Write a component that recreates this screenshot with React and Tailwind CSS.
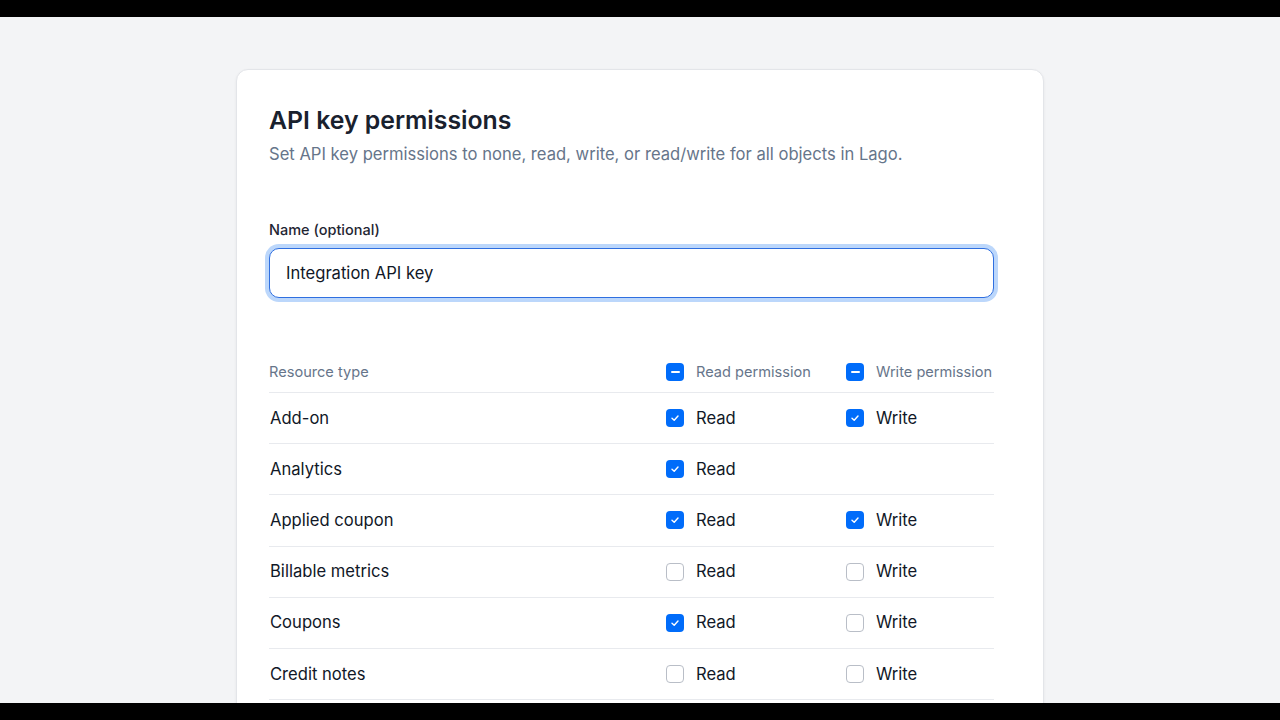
import React from "react";

const rows = [
  { name: "Add-on", read: true, write: true },
  { name: "Analytics", read: true, write: null },
  { name: "Applied coupon", read: true, write: true },
  { name: "Billable metrics", read: false, write: false },
  { name: "Coupons", read: true, write: false },
  { name: "Credit notes", read: false, write: false },
];

function Box({ state }) {
  if (state === "indeterminate") {
    return (
      <span className="flex h-[18px] w-[18px] shrink-0 items-center justify-center rounded-[4px] bg-[#006cfa]">
        <span className="h-[2px] w-[9px] rounded-full bg-white" />
      </span>
    );
  }
  if (state) {
    return (
      <span className="flex h-[18px] w-[18px] shrink-0 items-center justify-center rounded-[4px] bg-[#006cfa]">
        <svg width="10" height="10" viewBox="0 0 10 10" fill="none">
          <polyline points="2,5.2 4.2,7.2 8,3" stroke="white" strokeWidth="1.4" strokeLinecap="round" strokeLinejoin="round" />
        </svg>
      </span>
    );
  }
  return <span className="block h-[18px] w-[18px] shrink-0 rounded-[4px] border border-[#b9bec7] bg-white" />;
}

export default function App() {
  return (
    <div className="flex h-[720px] w-full flex-col overflow-hidden bg-black" style={{ fontFamily: "Inter, 'Noto Sans', sans-serif" }}>
      <div className="h-[17px] shrink-0 bg-black" />
      <div className="flex-1 overflow-hidden bg-[#f3f4f6]">
        <div className="mx-auto mt-[52px] w-[808px] rounded-[12px] border border-[#e3e5e9] bg-white pb-10 pl-8 pr-[49px] pt-[34px] shadow-[0_1px_3px_rgba(0,0,0,0.06)]">
          <h1 className="text-[24.8px] font-semibold leading-[32px] text-[#19212e]">API key permissions</h1>
          <p className="mt-[6px] text-[16.6px] leading-[24px] text-[#66758a]">
            Set API key permissions to none, read, write, or read/write for all objects in Lago.
          </p>

          <label className="mt-[54px] block text-[14.5px] font-medium leading-[20px] text-[#1f2633]">Name (optional)</label>
          <div className="mt-2 flex h-[50px] items-center rounded-[10px] border border-[#2f6fe0] bg-white px-4 ring-4 ring-[#bcd7fb]">
            <span className="text-[16.6px] text-[#111827]">Integration API key</span>
          </div>

          <div className="mt-[51px]">
            <div className="grid h-[44px] grid-cols-[397px_180px_148px] items-center border-b border-[#e8eaee] pt-[4px] text-[14.6px] text-[#66758a]">
              <span>Resource type</span>
              <span className="flex items-center gap-3">
                <Box state="indeterminate" />
                Read permission
              </span>
              <span className="flex items-center gap-3 whitespace-nowrap">
                <Box state="indeterminate" />
                Write permission
              </span>
            </div>
            {rows.map((r) => (
              <div key={r.name} className="grid h-[51.2px] grid-cols-[397px_180px_148px] items-center border-b border-[#e8eaee] text-[16.6px] text-[#111827]">
                <span className="pl-[1px]">{r.name}</span>
                <span className="flex items-center gap-3">
                  <Box state={r.read} />
                  Read
                </span>
                {r.write === null ? (
                  <span />
                ) : (
                  <span className="flex items-center gap-3">
                    <Box state={r.write} />
                    Write
                  </span>
                )}
              </div>
            ))}
          </div>
        </div>
      </div>
      <div className="h-[17px] shrink-0 bg-black" />
    </div>
  );
}
